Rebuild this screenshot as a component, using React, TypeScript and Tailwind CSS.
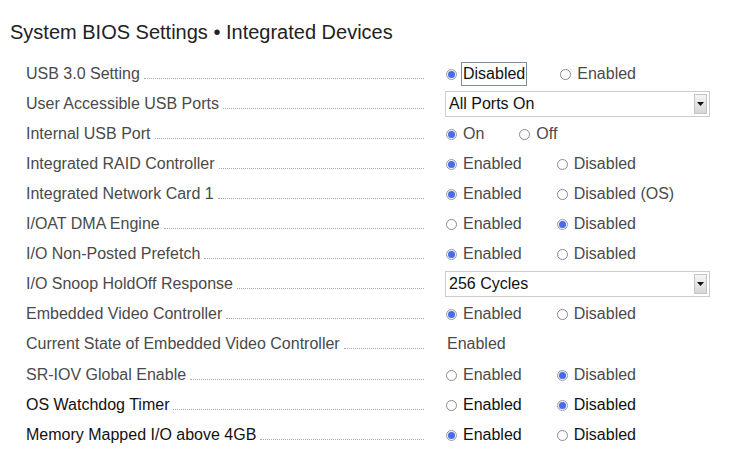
import React from "react";

type Row = {
  label: string;
  kind: "radio" | "select" | "text";
  options?: string[];
  checked?: number;
  value?: string;
  dark?: boolean;
  focus?: boolean;
};

const rows: Row[] = [
  { label: "USB 3.0 Setting", kind: "radio", options: ["Disabled", "Enabled"], checked: 0, focus: true },
  { label: "User Accessible USB Ports", kind: "select", value: "All Ports On" },
  { label: "Internal USB Port", kind: "radio", options: ["On", "Off"], checked: 0 },
  { label: "Integrated RAID Controller", kind: "radio", options: ["Enabled", "Disabled"], checked: 0 },
  { label: "Integrated Network Card 1", kind: "radio", options: ["Enabled", "Disabled (OS)"], checked: 0 },
  { label: "I/OAT DMA Engine", kind: "radio", options: ["Enabled", "Disabled"], checked: 1 },
  { label: "I/O Non-Posted Prefetch", kind: "radio", options: ["Enabled", "Disabled"], checked: 0 },
  { label: "I/O Snoop HoldOff Response", kind: "select", value: "256 Cycles" },
  { label: "Embedded Video Controller", kind: "radio", options: ["Enabled", "Disabled"], checked: 0 },
  { label: "Current State of Embedded Video Controller", kind: "text", value: "Enabled" },
  { label: "SR-IOV Global Enable", kind: "radio", options: ["Enabled", "Disabled"], checked: 1 },
  { label: "OS Watchdog Timer", kind: "radio", options: ["Enabled", "Disabled"], checked: 1, dark: true },
  { label: "Memory Mapped I/O above 4GB", kind: "radio", options: ["Enabled", "Disabled"], checked: 0, dark: true },
];

function Radio({ on }: { on: boolean }) {
  return on ? (
    <span className="flex h-[11px] w-[11px] shrink-0 items-center justify-center rounded-full border border-[#9aa0aa] bg-[#eef0f4]">
      <span className="h-[7px] w-[7px] rounded-full bg-[#4a6be6]" />
    </span>
  ) : (
    <span className="h-[11px] w-[11px] shrink-0 rounded-full border border-[#8a8a8a] bg-white" />
  );
}

function Select({ value }: { value: string }) {
  return (
    <div className="flex h-[26px] w-[265px] items-center justify-between border border-[#cccccc] bg-white pl-[3px] pr-[2px] text-[#111]">
      <span>{value}</span>
      <span className="flex h-[20px] w-[13px] items-center justify-center border border-[#c4c4c4] bg-gradient-to-b from-[#f6f6f6] to-[#d6d6d6]">
        <svg width="7" height="4" viewBox="0 0 7 4">
          <path d="M0 0h7L3.5 4z" fill="#111" />
        </svg>
      </span>
    </div>
  );
}

export default function App() {
  return (
    <div className="h-[468px] w-[733px] bg-white font-['Liberation_Sans',Arial,sans-serif] text-[16px]">
      <h1 className="pl-[10px] pt-[19px] text-[20px] leading-[26px] text-[#222]">
        System BIOS Settings • Integrated Devices
      </h1>
      <div className="mt-[14px] flex flex-col">
        {rows.map((row, idx) => (
          <div
            key={row.label}
            className={`flex h-[30px] items-center ${idx === 10 ? "mt-[1px]" : ""} ${
              row.dark ? "text-[#111]" : "text-[#4a4a4a]"
            }`}
          >
            <div className="flex w-[424px] items-baseline pl-[26px]">
              <span className="whitespace-nowrap">{row.label}</span>
              <span className="ml-[4px] h-0 flex-1 border-b border-dotted border-[#aaaaaa]" />
            </div>
            <div className="ml-[21px] flex items-center">
              {row.kind === "select" && <Select value={row.value!} />}
              {row.kind === "text" && <span className="pl-[2px]">{row.value}</span>}
              {row.kind === "radio" &&
                row.options!.map((opt, i) => (
                  <div key={opt} className="flex items-center pl-[1px] pr-[32px]">
                    <Radio on={row.checked === i} />
                    <span
                      className={`ml-[4px] px-[1px] leading-[22px] ${
                        row.focus && i === 0 ? "border border-[#7d8ba3] text-[#111]" : "border border-transparent"
                      }`}
                    >
                      {opt}
                    </span>
                  </div>
                ))}
            </div>
          </div>
        ))}
      </div>
    </div>
  );
}
